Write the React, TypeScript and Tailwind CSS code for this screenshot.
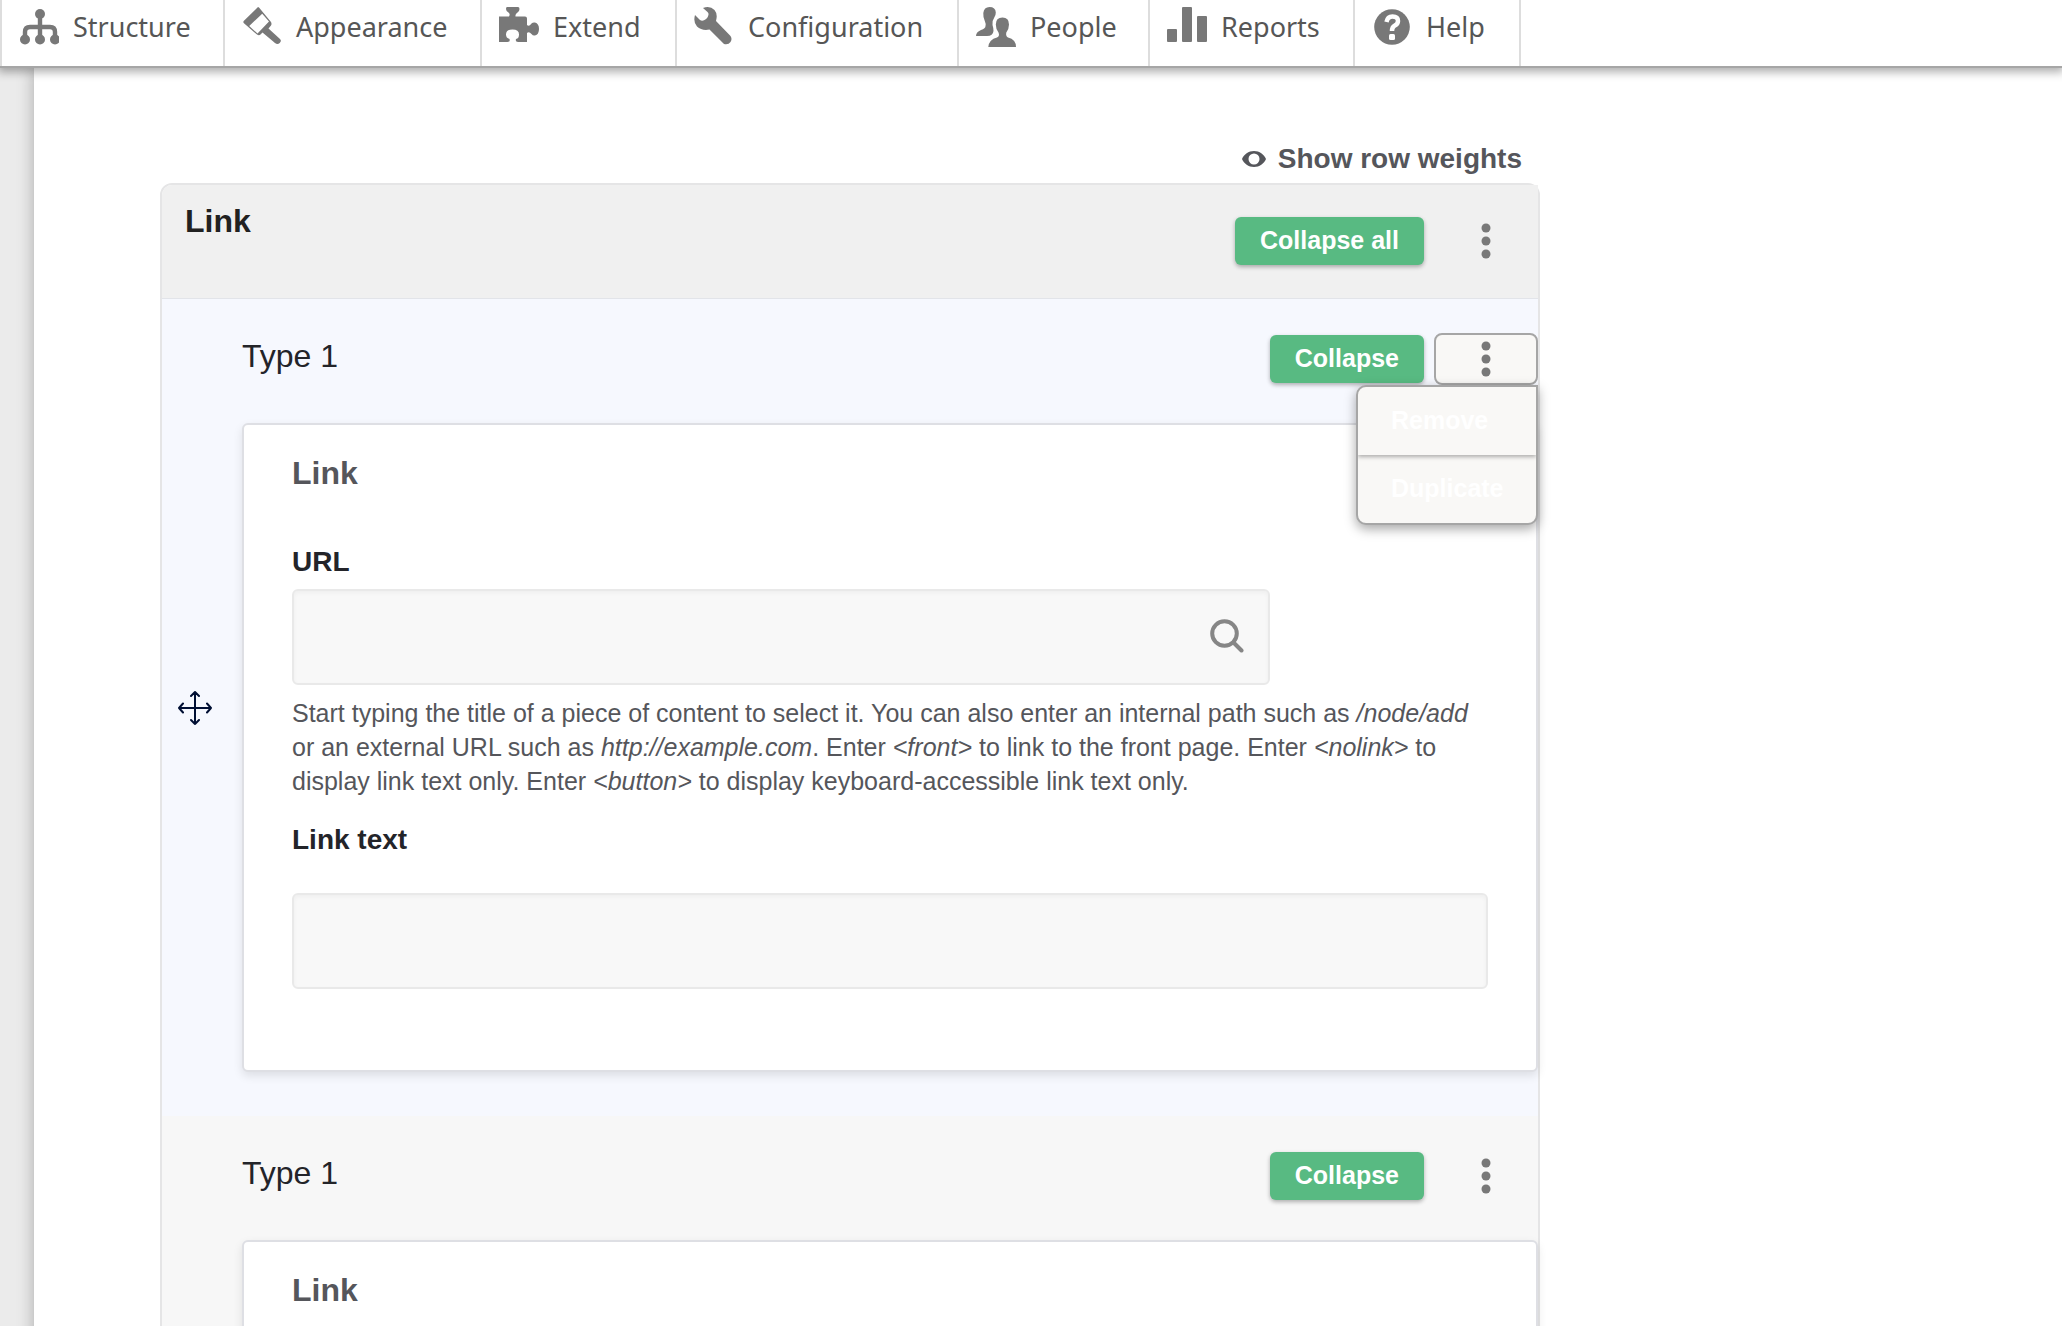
import React from "react";

const iconClass = "h-10 w-10 shrink-0 fill-[#787878]";

function StructureIcon() {
  return (
    <svg viewBox="-1 0 40 40" className={iconClass} aria-hidden="true">
      <path d="M20 10V33M5 33V25Q5 20 10 20H30Q35 20 35 25V33" className="fill-none stroke-[#787878]" strokeWidth="4.4" />
      <circle cx="20" cy="7" r="5" />
      <circle cx="5" cy="32.500" r="5" />
      <circle cx="20" cy="32.500" r="5" />
      <circle cx="35" cy="32.500" r="5" />
    </svg>
  );
}

function AppearanceIcon() {
  return (
    <svg viewBox="-1 0 40 40" className={iconClass} aria-hidden="true">
      <path d="M15 0L0.700 14Q0 15 0.700 16L14 27.500Q16 29 17.500 27.500L19.500 25.500L32 36Q34.500 38 36.700 36T37 32L25.500 21.500L28 18.500Q29 17 28 15L16 0.500Q15.500 0 15 0ZM19.200 6.800L26 14.500L14.500 26.500L6.200 19Z" fillRule="evenodd" />
    </svg>
  );
}

function ExtendIcon() {
  return (
    <svg viewBox="0 0 40 40" className={iconClass} aria-hidden="true">
      <path d="M8 0H19Q20.500 0 20.500 2Q20.500 4 18.500 5.500Q16 7 16.500 9.500H26Q28 9.500 28 11.500V18Q30 20 32.500 16.500Q34 15 36 15.500Q40 16.500 40 22T36 28.500Q34 29 32.500 27Q30 24 28 26V35H19Q16 35 17 32Q20 31.500 20 27.500Q20 22.500 13.500 22.500T7 27.500Q7 31 10.500 32Q11.500 35 8.500 35H0V9.500H10Q11.500 7 9.500 5.500Q7 4 7 2Q7 0 8 0Z" />
    </svg>
  );
}

function ConfigurationIcon() {
  return (
    <svg viewBox="0 0 40 40" className={iconClass} aria-hidden="true">
      <path d="M9 1Q16 -1.500 20.500 3Q24 7 22 14L36.500 29Q38.500 32 36.500 35T30 37L15.500 22.500Q8 24 3 19.500Q-1 15 1 8L6 13Q8 14.500 10.500 13Q14 11 14.500 7.500Q14.700 6 13.500 5Z" />
    </svg>
  );
}

function PeopleIcon() {
  return (
    <svg viewBox="0 0 40 40" className={iconClass} aria-hidden="true">
      <path d="M13.500 0Q19.500 0 19.800 5.500Q19.800 8 18.500 10Q16 13.500 16.500 18Q17.500 21 17.500 24Q17 29 11 29H0Q0 25 5 23Q9.500 21.500 9.500 19Q10 16.500 8.800 14Q7 10.500 7.300 6Q8 0 13.500 0Z" />
      <path d="M26.500 10.500Q33 10.500 33 17.500Q33 22 30.300 25.500Q29.500 29 32 30.500Q40 32.500 40 40H12.300Q13 32.500 21 30.500Q24 29 22.500 25.500Q19.800 22 19.800 17.500Q19.800 10.500 26.500 10.500Z" />
    </svg>
  );
}

function ReportsIcon() {
  return (
    <svg viewBox="0 0 40 40" className={iconClass} aria-hidden="true">
      <rect x="0" y="22" width="10" height="13" rx="1" />
      <rect x="15" y="0" width="10" height="35" rx="1" />
      <rect x="30" y="9" width="10" height="26" rx="1" />
    </svg>
  );
}

function HelpIcon() {
  return (
    <svg viewBox="0 0 40 40" className={iconClass} aria-hidden="true">
      <circle cx="20" cy="20" r="17.800" />
      <path d="M14.500 15Q15.500 9.500 20.500 9.500Q26 9.500 26 14Q26 17 22.500 18.700Q20 20 20 24" className="fill-none stroke-white" strokeWidth="4.500" />
      <rect x="17" y="27" width="6" height="6" rx="1.500" className="fill-white" />
    </svg>
  );
}

const tabs = [
  { name: "Structure", icon: <StructureIcon />, width: "w-[223px]" },
  { name: "Appearance", icon: <AppearanceIcon />, width: "w-[257px]" },
  { name: "Extend", icon: <ExtendIcon />, width: "w-[195px]" },
  { name: "Configuration", icon: <ConfigurationIcon />, width: "w-[282px]" },
  { name: "People", icon: <PeopleIcon />, width: "w-[191px]" },
  { name: "Reports", icon: <ReportsIcon />, width: "w-[205px]" },
  { name: "Help", icon: <HelpIcon />, width: "w-[166px]" },
];

function Toolbar() {
  return (
    <nav className="relative z-10 flex h-[68px] border-b-2 border-[#a6a6a6] bg-white shadow-[0_2px_9px_2px_rgba(0,0,0,0.33)]">
      <ul className="flex border-l-2 border-[#dddddd]">
        {tabs.map((tab) => (
          <li key={tab.name} className={tab.width}>
            <a
              href="#"
              className="flex h-full items-start gap-[14px] whitespace-nowrap border-r-2 border-[#dddddd] pl-[17px] pt-[7px] font-['Noto_Sans'] text-[27px] leading-10 text-[#565656]"
            >
              {tab.icon}
              {tab.name}
            </a>
          </li>
        ))}
      </ul>
    </nav>
  );
}

function Dots() {
  return (
    <svg viewBox="0 0 10 36" className="h-9 w-[10px] fill-[#787878]" aria-hidden="true">
      <circle cx="5" cy="5" r="4.500" />
      <circle cx="5" cy="18" r="4.500" />
      <circle cx="5" cy="31" r="4.500" />
    </svg>
  );
}

function GreenButton({ children }: { children: React.ReactNode }) {
  return (
    <button
      type="button"
      className="h-12 rounded-md bg-[#58ba82] px-[25px] pb-px text-[25px] font-bold text-white shadow-[0_2px_4px_rgba(0,0,0,0.3)]"
    >
      {children}
    </button>
  );
}

function Actions({ label, open = false }: { label: string; open?: boolean }) {
  return (
    <div className="relative flex items-center gap-[10px]">
      <GreenButton>{label}</GreenButton>
      <button
        type="button"
        aria-label="More actions"
        aria-expanded={open}
        className={
          open
            ? "flex h-[52px] w-[104px] items-center justify-center rounded-lg border-2 border-[#a6a6a6] bg-[#f9f8f6]"
            : "flex h-[52px] w-[104px] items-center justify-center"
        }
      >
        <Dots />
      </button>
      {open && (
        <div className="absolute right-0 top-full z-10 flex w-[182px] flex-col overflow-hidden rounded-[10px] rounded-tr-none border-2 border-[#a6a6a6] bg-[#f9f8f6] text-[25px] font-bold text-white shadow-[0_4px_12px_rgba(0,0,0,0.35)]">
          <button type="button" className="h-[68px] pl-[33px] text-left shadow-[0_2px_4px_rgba(0,0,0,0.3)]">
            Remove
          </button>
          <button type="button" className="h-[68px] pl-[33px] text-left">
            Duplicate
          </button>
        </div>
      )}
    </div>
  );
}

const fieldClass =
  "block h-24 w-full rounded-md border-2 border-[#e9e9e9] bg-[#f8f8f8] px-6 text-[25px] shadow-[inset_0_2px_4px_rgba(0,0,0,0.04)] outline-none";

function LinkFields() {
  return (
    <>
      <label htmlFor="link-url" className="mt-[51px] block text-[28px] font-bold leading-9 text-[#232429]">
        URL
      </label>
      <div className="relative mt-[9px] w-[978px] max-w-full">
        <input id="link-url" type="text" className={fieldClass} />
        <svg viewBox="0 0 34 34" className="absolute right-[26px] top-[30px] h-[34px] w-[34px] fill-none stroke-[#868686]" strokeWidth="4" strokeLinecap="round" aria-hidden="true">
          <circle cx="14.500" cy="14.500" r="12.300" />
          <path d="M23.500 23.500L31.500 31.500" />
        </svg>
      </div>
      <p className="mt-[11px] text-[25px] leading-[34px] text-[#55565b]">
        Start typing the title of a piece of content to select it. You can also enter an internal path such as{" "}
        <em>/node/add</em> or an external URL such as <em>http://example.com</em>. Enter <em>&lt;front&gt;</em> to
        link to the front page. Enter <em>&lt;nolink&gt;</em> to display link text only. Enter{" "}
        <em>&lt;button&gt;</em> to display keyboard-accessible link text only.
      </p>
      <label htmlFor="link-text" className="mt-6 block text-[28px] font-bold leading-9 text-[#232429]">
        Link text
      </label>
      <input id="link-text" type="text" className={`${fieldClass} mt-[35px]`} />
    </>
  );
}

function Row({ open = false, tone, children }: { open?: boolean; tone: string; children?: React.ReactNode }) {
  return (
    <tr className={tone}>
      <td className="w-20 p-0 align-middle">
        {children && (
          <a href="#" aria-label="Drag to re-order" className="flex justify-center pr-[14px]">
            <svg viewBox="0 0 34 34" className="h-[34px] w-[34px] fill-none stroke-[#000f33] stroke-2" strokeLinecap="round" strokeLinejoin="round">
              <path d="M17 1V33M1 17H33M13 5L17 1L21 5M13 29L17 33L21 29M5 12.500L1 17L5 21.500M29 12.500L33 17L29 21.500" />
            </svg>
          </a>
        )}
      </td>
      <td className="p-0 pb-11 pt-[34px] align-top">
        <div className="flex items-center justify-between">
          <div className="pb-[7px] text-[32px] leading-10 text-[#232429]">Type 1</div>
          <Actions label="Collapse" open={open} />
        </div>
        <section className="mt-[38px] rounded-md border-2 border-[#dedfe4] bg-white px-12 pb-[81px] pt-7 shadow-[0_4px_10px_rgba(0,0,0,0.1)]">
          <h3 className="text-[32px] font-bold leading-10 text-[#55565b]">Link</h3>
          {children}
        </section>
      </td>
    </tr>
  );
}

export default function App() {
  return (
    <div className="min-h-screen bg-[#ebebeb] font-['Liberation_Sans',sans-serif]">
      <Toolbar />
      <main className="ml-[34px] bg-white pl-[126px] pt-[73px] shadow-[0_0_16px_rgba(0,0,0,0.28)]">
        <div className="w-[1380px] max-w-full">
          <div className="flex justify-end pr-[18px]">
            <button type="button" className="flex items-center gap-3 text-[28px] font-bold leading-9 text-[#55565b]">
              <svg viewBox="0 0 24 16" className="h-4 w-6 fill-[#55565b]" aria-hidden="true">
                <path fillRule="evenodd" d="M12 0C6.500 0 2 3.300 0 8C2 12.700 6.500 16 12 16S22 12.700 24 8C22 3.300 17.500 0 12 0ZM12 2.500A5.500 5.500 0 1 1 12 13.500A5.500 5.500 0 1 1 12 2.500Z" />
              </svg>
              Show row weights
            </button>
          </div>
          <div className="mt-1.5 rounded-xl border-2 border-[#e5e5e6]">
            <table className="w-full border-collapse">
              <thead>
                <tr>
                  <th colSpan={2} className="rounded-tl-[10px] border-b border-[#e2e4e9] bg-[#f0f0f0] p-0 text-left">
                    <div className="flex h-[113px] items-start justify-between pl-[23px]">
                      <h2 className="pt-4 text-[32px] font-bold leading-10 text-[#212121]">Link</h2>
                      <div className="pt-[30px]">
                        <Actions label="Collapse all" />
                      </div>
                    </div>
                  </th>
                </tr>
              </thead>
              <tbody>
                <Row tone="bg-[#f6f8fe]" open>
                  <LinkFields />
                </Row>
                <Row tone="bg-[#f7f7f7]" />
              </tbody>
            </table>
          </div>
        </div>
      </main>
    </div>
  );
}
